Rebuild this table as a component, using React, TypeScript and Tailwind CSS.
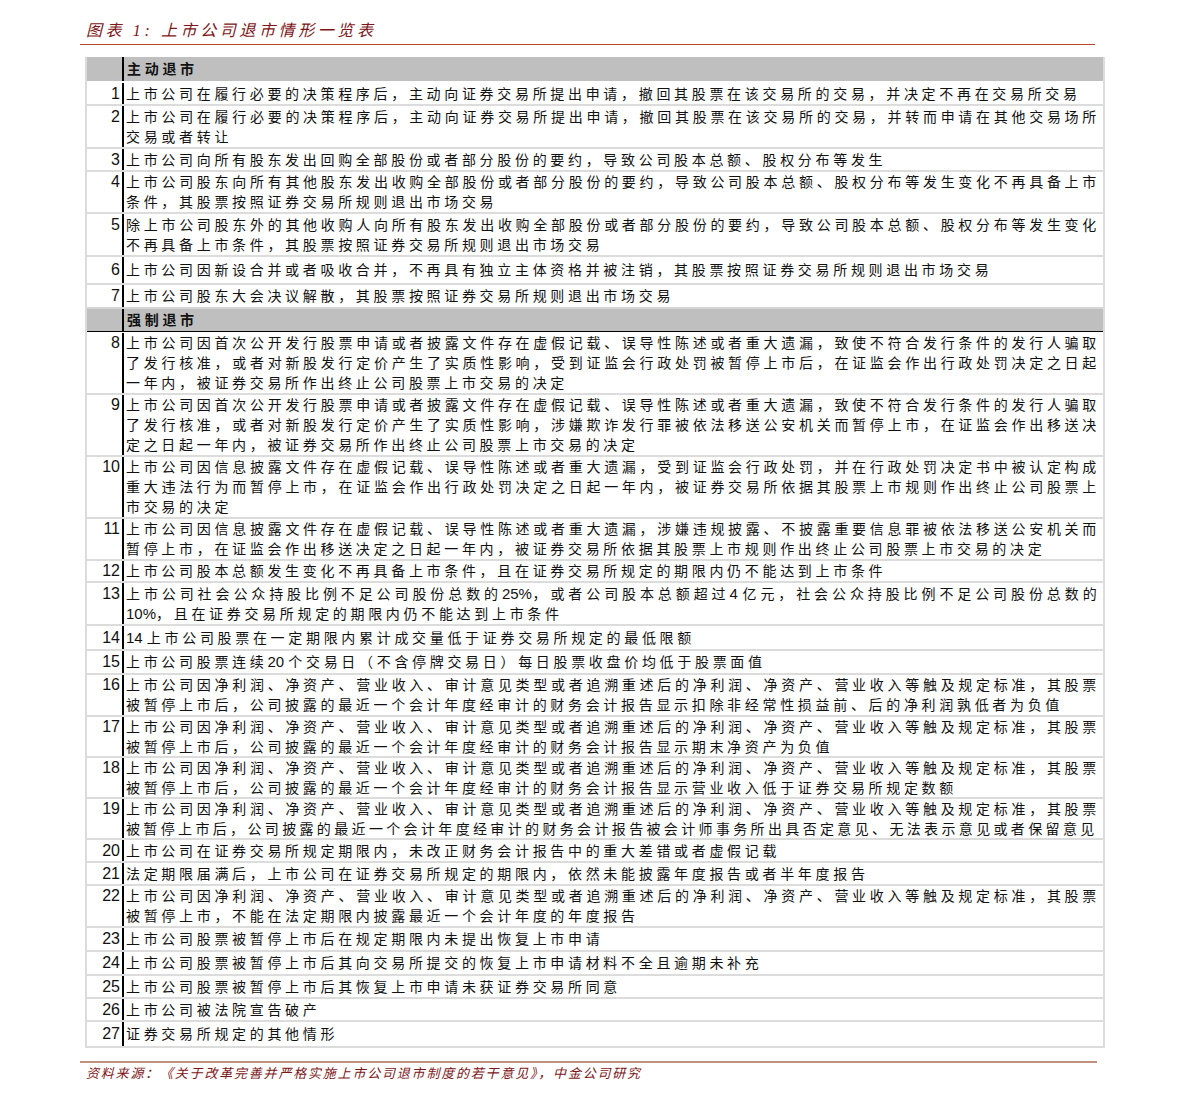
import React from "react";

type Row =
  | { kind: "h"; label: string; cls: string }
  | { kind: "r"; n: number; lines: string[]; cls: string };

const L1_16 =
  "上市公司因净利润、净资产、营业收入、审计意见类型或者追溯重述后的净利润、净资产、营业收入等触及规定标准，其股票";
const L1_8 =
  "上市公司因首次公开发行股票申请或者披露文件存在虚假记载、误导性陈述或者重大遗漏，致使不符合发行条件的发行人骗取";

const rows: Row[] = [
  { kind: "h", label: "主动退市", cls: "h-[24px]" },
  {
    kind: "r",
    n: 1,
    cls: "h-[23px]",
    lines: [
      "上市公司在履行必要的决策程序后，主动向证券交易所提出申请，撤回其股票在该交易所的交易，并决定不再在交易所交易",
    ],
  },
  {
    kind: "r",
    n: 2,
    cls: "h-[43px]",
    lines: [
      "上市公司在履行必要的决策程序后，主动向证券交易所提出申请，撤回其股票在该交易所的交易，并转而申请在其他交易场所",
      "交易或者转让",
    ],
  },
  {
    kind: "r",
    n: 3,
    cls: "h-[23px]",
    lines: [
      "上市公司向所有股东发出回购全部股份或者部分股份的要约，导致公司股本总额、股权分布等发生",
    ],
  },
  {
    kind: "r",
    n: 4,
    cls: "h-[42px]",
    lines: [
      "上市公司股东向所有其他股东发出收购全部股份或者部分股份的要约，导致公司股本总额、股权分布等发生变化不再具备上市",
      "条件，其股票按照证券交易所规则退出市场交易",
    ],
  },
  {
    kind: "r",
    n: 5,
    cls: "h-[43px]",
    lines: [
      "除上市公司股东外的其他收购人向所有股东发出收购全部股份或者部分股份的要约，导致公司股本总额、股权分布等发生变化",
      "不再具备上市条件，其股票按照证券交易所规则退出市场交易",
    ],
  },
  {
    kind: "r",
    n: 6,
    cls: "h-[28px]",
    lines: [
      "上市公司因新设合并或者吸收合并，不再具有独立主体资格并被注销，其股票按照证券交易所规则退出市场交易",
    ],
  },
  {
    kind: "r",
    n: 7,
    cls: "h-[24px]",
    lines: ["上市公司股东大会决议解散，其股票按照证券交易所规则退出市场交易"],
  },
  { kind: "h", label: "强制退市", cls: "h-[24px]" },
  {
    kind: "r",
    n: 8,
    cls: "h-[62px]",
    lines: [
      L1_8,
      "了发行核准，或者对新股发行定价产生了实质性影响，受到证监会行政处罚被暂停上市后，在证监会作出行政处罚决定之日起",
      "一年内，被证券交易所作出终止公司股票上市交易的决定",
    ],
  },
  {
    kind: "r",
    n: 9,
    cls: "h-[62px]",
    lines: [
      L1_8,
      "了发行核准，或者对新股发行定价产生了实质性影响，涉嫌欺诈发行罪被依法移送公安机关而暂停上市，在证监会作出移送决",
      "定之日起一年内，被证券交易所作出终止公司股票上市交易的决定",
    ],
  },
  {
    kind: "r",
    n: 10,
    cls: "h-[62px]",
    lines: [
      "上市公司因信息披露文件存在虚假记载、误导性陈述或者重大遗漏，受到证监会行政处罚，并在行政处罚决定书中被认定构成",
      "重大违法行为而暂停上市，在证监会作出行政处罚决定之日起一年内，被证券交易所依据其股票上市规则作出终止公司股票上",
      "市交易的决定",
    ],
  },
  {
    kind: "r",
    n: 11,
    cls: "h-[42px]",
    lines: [
      "上市公司因信息披露文件存在虚假记载、误导性陈述或者重大遗漏，涉嫌违规披露、不披露重要信息罪被依法移送公安机关而",
      "暂停上市，在证监会作出移送决定之日起一年内，被证券交易所依据其股票上市规则作出终止公司股票上市交易的决定",
    ],
  },
  {
    kind: "r",
    n: 12,
    cls: "h-[22px]",
    lines: [
      "上市公司股本总额发生变化不再具备上市条件，且在证券交易所规定的期限内仍不能达到上市条件",
    ],
  },
  {
    kind: "r",
    n: 13,
    cls: "h-[43px]",
    lines: [
      "上市公司社会公众持股比例不足公司股份总数的25%，或者公司股本总额超过4 亿元，社会公众持股比例不足公司股份总数的",
      "10%，且在证券交易所规定的期限内仍不能达到上市条件",
    ],
  },
  {
    kind: "r",
    n: 14,
    cls: "h-[25px]",
    lines: ["14 上市公司股票在一定期限内累计成交量低于证券交易所规定的最低限额"],
  },
  {
    kind: "r",
    n: 15,
    cls: "h-[24px]",
    lines: [
      "上市公司股票连续20 个交易日（不含停牌交易日）每日股票收盘价均低于股票面值",
    ],
  },
  {
    kind: "r",
    n: 16,
    cls: "h-[42px]",
    lines: [
      L1_16,
      "被暂停上市后，公司披露的最近一个会计年度经审计的财务会计报告显示扣除非经常性损益前、后的净利润孰低者为负值",
    ],
  },
  {
    kind: "r",
    n: 17,
    cls: "h-[41px]",
    lines: [
      L1_16,
      "被暂停上市后，公司披露的最近一个会计年度经审计的财务会计报告显示期末净资产为负值",
    ],
  },
  {
    kind: "r",
    n: 18,
    cls: "h-[41px]",
    lines: [
      L1_16,
      "被暂停上市后，公司披露的最近一个会计年度经审计的财务会计报告显示营业收入低于证券交易所规定数额",
    ],
  },
  {
    kind: "r",
    n: 19,
    cls: "h-[41px]",
    lines: [
      L1_16,
      "被暂停上市后，公司披露的最近一个会计年度经审计的财务会计报告被会计师事务所出具否定意见、无法表示意见或者保留意见",
    ],
  },
  {
    kind: "r",
    n: 20,
    cls: "h-[23px]",
    lines: ["上市公司在证券交易所规定期限内，未改正财务会计报告中的重大差错或者虚假记载"],
  },
  {
    kind: "r",
    n: 21,
    cls: "h-[23px]",
    lines: [
      "法定期限届满后，上市公司在证券交易所规定的期限内，依然未能披露年度报告或者半年度报告",
    ],
  },
  {
    kind: "r",
    n: 22,
    cls: "h-[42px]",
    lines: [L1_16, "被暂停上市，不能在法定期限内披露最近一个会计年度的年度报告"],
  },
  {
    kind: "r",
    n: 23,
    cls: "h-[24px]",
    lines: ["上市公司股票被暂停上市后在规定期限内未提出恢复上市申请"],
  },
  {
    kind: "r",
    n: 24,
    cls: "h-[24px]",
    lines: ["上市公司股票被暂停上市后其向交易所提交的恢复上市申请材料不全且逾期未补充"],
  },
  {
    kind: "r",
    n: 25,
    cls: "h-[23px]",
    lines: ["上市公司股票被暂停上市后其恢复上市申请未获证券交易所同意"],
  },
  { kind: "r", n: 26, cls: "h-[23px]", lines: ["上市公司被法院宣告破产"] },
  { kind: "r", n: 27, cls: "h-[26px]", lines: ["证券交易所规定的其他情形"] },
];

function renderText(s: string) {
  const parts = s.split(/([0-9%]+ ?)/);
  return parts.map((p, i) =>
    /^[0-9%]+ ?$/.test(p) ? (
      <span key={i} className="tracking-normal text-[15px]">
        {p}
      </span>
    ) : (
      <React.Fragment key={i}>{p}</React.Fragment>
    )
  );
}

const bodyFont =
  "[font-family:'Liberation_Sans','Noto_Sans_CJK_SC',sans-serif]";

export default function App() {
  return (
    <div className="w-[1191px] min-h-[1100px] bg-white pt-[19px] pl-[80px] text-[#111]">
      <div className="w-[1015px] border-b border-[#b8482a] pb-[1px] pl-[6px]">
        <div className="text-[16px] leading-[24px] tracking-[3.6px] italic text-[#7d1618] [font-family:'Liberation_Serif','Noto_Sans_CJK_SC',serif]">
          图表 1: 上市公司退市情形一览表
        </div>
      </div>

      <div className="mt-[12px] ml-[5px] w-[1020px] border-x-2 border-b-2 border-[#dcdcdc]">
        {rows.map((r, idx) => {
          if (r.kind === "h") {
            const topCls = idx === 0 ? "" : "border-t-2 border-[#d6d6d6]";
            return (
              <div key={idx} className={`flex bg-[#bfbfbf] ${r.cls} ${topCls}`}>
                <div className="w-[35px] shrink-0" />
                <div
                  className={`flex-1 flex items-center border-l-2 border-black pl-[3px] text-[14px] font-bold tracking-[3.7px] text-[#111] ${bodyFont}`}
                >
                  {r.label}
                </div>
              </div>
            );
          }
          const prev = rows[idx - 1];
          const afterHeader = prev && prev.kind === "h";
          const topCls = afterHeader
            ? idx > 1
              ? "border-t border-black pt-px"
              : "pt-[2px]"
            : "border-t-2 border-[#dcdcdc]";
          return (
            <div key={idx} className={`flex ${r.cls} ${topCls}`}>
              <div className="w-[35px] shrink-0 flex flex-col justify-center pr-[2px] text-right text-[16px] [font-family:'Liberation_Sans',Arial,sans-serif]">
                {r.lines.map((_, j) => (
                  <div key={j} className="h-[20px] leading-[20px]">
                    {j === 0 ? r.n : ""}
                  </div>
                ))}
              </div>
              <div
                className={`flex-1 flex flex-col justify-center border-l-2 border-black pl-[2px] pr-[3px] text-[14px] leading-[20px] ${bodyFont}`}
              >
                {r.lines.map((ln, j) => {
                  const last = j === r.lines.length - 1;
                  const track =
                    ln.length >= 56 ? "tracking-[3.35px]" : "tracking-[3.68px]";
                  return (
                    <div
                      key={j}
                      className={`${track} whitespace-nowrap ${
                        last ? "" : "text-justify [text-align-last:justify]"
                      }`}
                    >
                      {renderText(ln)}
                    </div>
                  );
                })}
              </div>
            </div>
          );
        })}
      </div>

      <div className="mt-[13px] w-[1017px] border-t-2 border-[#c0917f]">
        <div className="pt-[2px] pl-[6px] text-[13px] leading-[18px] tracking-[1.8px] italic text-[#7d1618] [font-family:'Liberation_Serif','Noto_Sans_CJK_SC',serif]">
          资料来源：《关于改革完善并严格实施上市公司退市制度的若干意见》，中金公司研究
        </div>
      </div>
    </div>
  );
}
